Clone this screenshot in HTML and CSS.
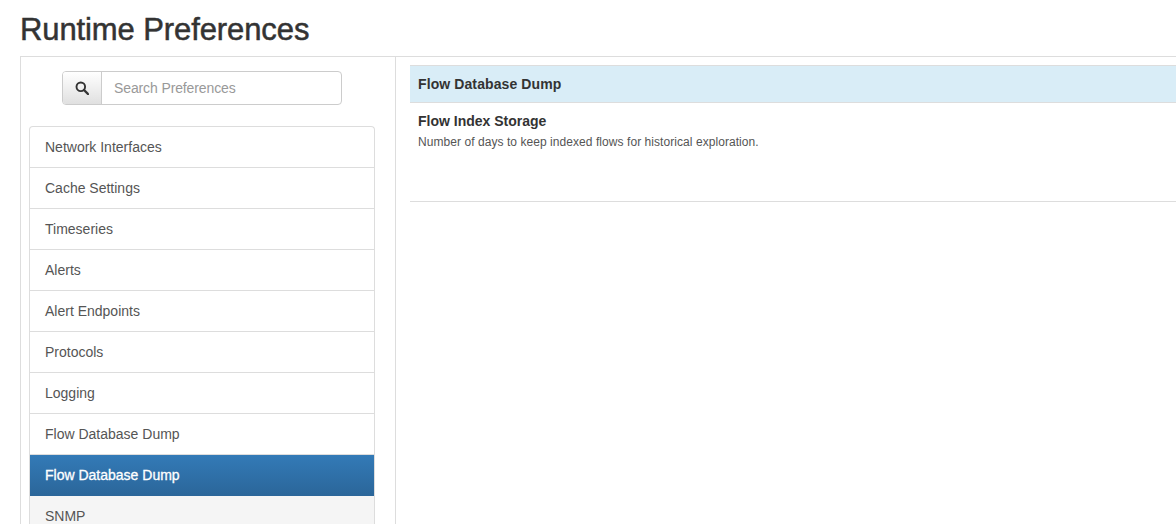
FILE: index.html
```html
<!DOCTYPE html>
<html lang="en">
<head>
    <meta charset="UTF-8">
    <meta name="viewport" content="width=device-width, initial-scale=1.0">
    <link rel="stylesheet" href="styles.css">
    <title>Runtime Preferences</title>
</head>
<body>
    <h2 class="page-title">Runtime Preferences</h2>
    <div class="prefs">
        <div class="sidebar">
            <div class="search-row">
                <div class="search">
                    <span class="search-addon">
                        <svg width="14" height="14" viewBox="0 0 14 14">
                            <circle cx="5.8" cy="5.8" r="4.3" fill="none" stroke="#333" stroke-width="1.9"/>
                            <path d="M9 9l4 4" fill="none" stroke="#333" stroke-width="2.4" stroke-linecap="round"/>
                        </svg>
                    </span>
                    <span class="search-input">Search Preferences</span>
                </div>
            </div>
            <div class="menu">
                <div class="menu-item">Network Interfaces</div>
                <div class="menu-item">Cache Settings</div>
                <div class="menu-item">Timeseries</div>
                <div class="menu-item">Alerts</div>
                <div class="menu-item">Alert Endpoints</div>
                <div class="menu-item">Protocols</div>
                <div class="menu-item">Logging</div>
                <div class="menu-item">Flow Database Dump</div>
                <div class="menu-item active">Flow Database Dump</div>
                <div class="menu-item muted">SNMP</div>
            </div>
        </div>
        <div class="content">
            <div class="section-head">Flow Database Dump</div>
            <div class="pref-row">
                <div class="pref-title">Flow Index Storage</div>
                <div class="pref-desc">Number of days to keep indexed flows for historical exploration.</div>
            </div>
        </div>
    </div>
</body>
</html>
```

FILE: styles.css
```css
html, body {
    height: 524px;
    overflow: hidden;
}

body {
    margin: 0;
    font-family: "Liberation Sans", Arial, sans-serif;
    font-size: 14px;
    color: #333;
    background: #fff;
}

.page-title {
    margin: 0;
    padding: 13px 0 9px 20px;
    height: 34px;
    line-height: 34px;
    font-size: 31px;
    font-weight: 400;
    letter-spacing: -0.1px;
    -webkit-text-stroke: 0.5px #333;
}

.prefs {
    display: flex;
    width: 1176px;
    margin-left: 20px;
    height: 468px;
    border-top: 1px solid #ddd;
    border-left: 1px solid #ddd;
    box-sizing: border-box;
}

.sidebar {
    width: 375px;
    flex: none;
    padding: 14px 20px 0 8px;
    box-sizing: border-box;
    border-right: 1px solid #ddd;
}

.search-row {
    display: flex;
    justify-content: center;
    margin-bottom: 21px;
}

.search {
    display: flex;
    width: 280px;
    height: 34px;
    box-sizing: border-box;
    border: 1px solid #ccc;
    border-radius: 4px;
}

.search-addon {
    display: flex;
    align-items: center;
    justify-content: center;
    width: 38px;
    flex: none;
    border-right: 1px solid #ccc;
    border-radius: 3px 0 0 3px;
    background: linear-gradient(to bottom, #fff, #e0e0e0);
}

.search-input {
    padding-left: 12px;
    line-height: 32px;
    color: #999;
    letter-spacing: -0.12px;
}

.menu {
    width: 346px;
    box-sizing: border-box;
    border: 1px solid #ddd;
    border-bottom: none;
    border-radius: 4px 4px 0 0;
}

.menu-item {
    height: 41px;
    box-sizing: border-box;
    padding-left: 15px;
    line-height: 40px;
    color: #555;
    border-bottom: 1px solid #ddd;
}

.menu-item.active {
    color: #fff;
    -webkit-text-stroke: 0.3px #fff;
    background: linear-gradient(to bottom, #337ab7, #2b669a);
    border-bottom-color: #2b669a;
}

.menu-item.muted {
    background: #f5f5f5;
}

.content {
    flex: 1;
    padding-top: 8px;
    padding-left: 14px;
    min-width: 0;
}

.section-head {
    height: 38px;
    box-sizing: border-box;
    padding-left: 8px;
    line-height: 37px;
    font-weight: 700;
    letter-spacing: 0.1px;
    background: #d9edf7;
    border-top: 1px solid #ddd;
    border-bottom: 1px solid #ddd;
}

.pref-row {
    height: 99px;
    box-sizing: border-box;
    padding: 8px 8px 0;
    border-bottom: 1px solid #ddd;
}

.pref-title {
    line-height: 20px;
    font-weight: 700;
}

.pref-desc {
    margin-top: 3px;
    line-height: 16px;
    font-size: 12px;
    letter-spacing: 0.06px;
    color: #555;
}
```
